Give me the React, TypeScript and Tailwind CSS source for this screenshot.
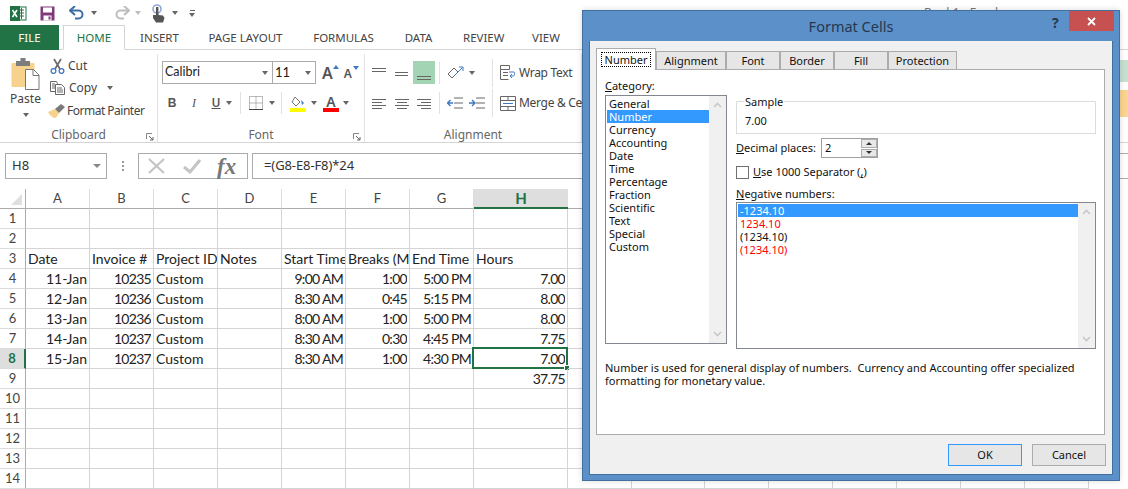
import { ReactNode } from "react";

const caret = "w-0 h-0 border-x-[3.5px] border-x-transparent border-t-[4px] border-t-[#666]";

function Caret({ className = "" }: { className?: string }) {
  return <span className={`${caret} inline-block shrink-0 ${className}`} />;
}

function Lines({ rows, className = "" }: { rows: [number, number, number][]; className?: string }) {
  // each row: x, y, width
  return (
    <svg width="16" height="16" viewBox="0 0 16 16" className={`shrink-0 ${className}`}>
      {rows.map(([x, y, w], i) => (
        <rect key={i} x={x} y={y} width={w} height="1" fill="#666" />
      ))}
    </svg>
  );
}

function ExcelLogo() {
  return (
    <svg width="17" height="17" viewBox="0 0 17 17">
      <rect x="6" y="2" width="10" height="13" fill="#fff" stroke="#207245" />
      <path d="M9 5h5M9 8h5M9 11h5M11.5 3v11" stroke="#207245" />
      <rect x="0" y="1" width="10" height="15" fill="#207245" />
      <path d="M2.5 5l4.5 7M7 5l-4.5 7" stroke="#fff" strokeWidth="1.6" />
    </svg>
  );
}

function SaveIcon() {
  return (
    <svg width="15" height="15" viewBox="0 0 15 15">
      <rect x="0.5" y="0.5" width="14" height="14" fill="#80397b" />
      <rect x="3" y="1.5" width="9" height="5" fill="#fff" />
      <rect x="3.5" y="9.5" width="8" height="5" fill="#fff" />
      <rect x="8.5" y="10.5" width="2" height="3" fill="#80397b" />
    </svg>
  );
}

function UndoIcon({ color }: { color: string }) {
  return (
    <svg width="16" height="14" viewBox="0 0 16 14" fill="none">
      <path d="M2 4.5h7.5a4 4 0 0 1 0 8H6" stroke={color} strokeWidth="2" />
      <path d="M6 0L1 4.5 6 9" stroke={color} strokeWidth="2" />
    </svg>
  );
}

function RedoIcon({ color }: { color: string }) {
  return (
    <svg width="16" height="14" viewBox="0 0 16 14" fill="none">
      <path d="M14 4.5H6.5a4 4 0 0 0 0 8H10" stroke={color} strokeWidth="2" />
      <path d="M10 0l5 4.5L10 9" stroke={color} strokeWidth="2" />
    </svg>
  );
}

function TouchIcon() {
  return (
    <svg width="13" height="19" viewBox="0 0 13 19">
      <circle cx="5" cy="5" r="4" fill="none" stroke="#8fa6d8" strokeWidth="1.6" />
      <rect x="4" y="3" width="2.4" height="9" fill="#555" />
      <path d="M1 11l3 0 0-1h2.4l0 1L11 11.5 12.5 14 11 18.5H4L1 14z" fill="#555" />
    </svg>
  );
}

function ClipboardIcon() {
  return (
    <svg width="29" height="32" viewBox="0 0 29 32">
      <rect x="0.5" y="5" width="23" height="24" rx="1" fill="#f6d28c" />
      <rect x="5" y="3" width="14" height="5" fill="#7d7d7d" />
      <rect x="9.5" y="0" width="5" height="5" fill="#7d7d7d" />
      <path d="M14.5 11.5h8l5.5 5.5v14.5H14.5z" fill="#fff" stroke="#777" />
      <path d="M22 11.5v6h6" fill="none" stroke="#777" />
    </svg>
  );
}

function ScissorsIcon() {
  return (
    <svg width="15" height="16" viewBox="0 0 15 16" fill="none">
      <path d="M4 1l6 10M11 1L5 11" stroke="#6b6b6b" strokeWidth="1.7" />
      <circle cx="3.5" cy="13" r="2.4" stroke="#3f78c4" strokeWidth="1.3" />
      <circle cx="11.5" cy="13" r="2.4" stroke="#3f78c4" strokeWidth="1.3" />
    </svg>
  );
}

function CopyIcon() {
  return (
    <svg width="16" height="14" viewBox="0 0 16 14" fill="none" stroke="#666">
      <path d="M.5.5h6l1 2v8h-7z" fill="#fff" />
      <path d="M5.5 3.5h6l3 3v7h-9z" fill="#fff" />
      <path d="M2 3h3M2 5h3M2 7h3M7 7h5M7 9h6M7 11h6" />
    </svg>
  );
}

function PainterIcon() {
  return (
    <svg width="17" height="14" viewBox="0 0 17 14">
      <path d="M0 8l7-3 4 4-3 5C5 14 2 12 0 8z" fill="#f6d28c" />
      <path d="M7 5l6-5 4 3-6 6z" fill="#7a7a7a" />
    </svg>
  );
}

function Launcher() {
  return (
    <svg width="8" height="8" viewBox="0 0 8 8" fill="none" className="shrink-0">
      <path d="M.5 6V.5H6" stroke="#888" />
      <path d="M3 3l4 4M7 4v3H4" stroke="#666" />
    </svg>
  );
}

function Sep({ tall, className = "" }: { tall?: boolean; className?: string }) {
  return <div className={`w-px bg-[#e1e1e1] shrink-0 ${tall ? "h-[28px]" : "h-[22px]"} ${className}`} />;
}

function Group({ label, className = "", launcher, children }: { label: string; className?: string; launcher?: boolean; children: ReactNode }) {
  return (
    <div className={`relative h-[88px] shrink-0 border-r border-[#e1e1e1] ${className}`}>
      {children}
      <div className="absolute bottom-[-1px] inset-x-0 text-center text-[12px] leading-[16px] text-[#666]">{label}</div>
      {launcher && (
        <div className="absolute right-[3px] bottom-[1px] flex">
          <Launcher />
        </div>
      )}
    </div>
  );
}

function ClipboardGroup() {
  return (
    <Group label="Clipboard" launcher className="w-[158px]">
      <div className="flex">
        <div className="w-[50px] flex flex-col items-center pt-[4px] pl-[1px]">
          <ClipboardIcon />
          <div className="text-[12px] leading-[16px] mt-[1px] text-[#444]">Paste</div>
          <Caret className="mt-[6px]" />
        </div>
        <div className="flex flex-col pt-[2px] text-[12px] text-[#444] leading-[22px]">
          <div className="flex items-center gap-[3px] h-[20px]">
            <ScissorsIcon />
            <span>Cut</span>
          </div>
          <div className="flex items-center gap-[3px] h-[22px] mt-[1px]">
            <CopyIcon />
            <span>Copy</span>
            <Caret className="ml-[7px]" />
          </div>
          <div className="flex items-center gap-[2px] h-[22px] mt-[1px] -ml-[2px]">
            <PainterIcon />
            <span className="tracking-[-0.5px]">Format Painter</span>
          </div>
        </div>
      </div>
    </Group>
  );
}

function FontGroup() {
  return (
    <Group label="Font" launcher className="w-[207px]">
      <div className="flex items-center pt-[7px] pl-[4px]">
        <div className="w-[111px] h-[23px] border border-[#ababab] flex items-center justify-between px-[2px] pr-[4px] text-[12.5px] font-['Lato',sans-serif] text-[#222]">
          <span>Calibri</span>
          <Caret />
        </div>
        <div className="w-[44px] h-[23px] -ml-px border border-[#ababab] flex items-center justify-between px-[2px] pr-[4px] text-[13px] font-['Lato',sans-serif] text-[#222]">
          <span>11</span>
          <Caret />
        </div>
        <div className="ml-[6px] text-[16px] leading-none font-semibold text-[#555] relative">
          A<span className="absolute -right-[6px] top-[0px] w-0 h-0 border-x-[3px] border-x-transparent border-b-[4px] border-b-[#3f78c4]" />
        </div>
        <div className="ml-[11px] text-[12px] leading-none font-semibold text-[#555] relative mt-[2px]">
          A<span className="absolute -right-[7px] -top-[2px] w-0 h-0 border-x-[3px] border-x-transparent border-t-[4px] border-t-[#3f78c4]" />
        </div>
      </div>
      <div className="flex items-center h-[22px] mt-[8px] pl-[7px] text-[#555]">
        <span className="w-[14px] text-center text-[12px] font-bold font-['Liberation_Sans',sans-serif]">B</span>
        <span className="w-[14px] ml-[8px] text-center text-[12px] italic font-['Liberation_Serif',serif]">I</span>
        <span className="w-[14px] ml-[8px] text-center text-[12px] font-semibold underline">U</span>
        <Caret className="ml-[3px]" />
        <Sep className="ml-[8px]" />
        <svg width="14" height="14" viewBox="0 0 14 14" className="ml-[8px]" fill="none">
          <path d="M.5.5h13v13h-13zM7 .5v13M.5 7h13" stroke="#777" strokeDasharray="1 1" />
          <path d="M0 13.5h14" stroke="#444" />
        </svg>
        <Caret className="ml-[6px]" />
        <Sep className="ml-[6px]" />
        <svg width="17" height="17" viewBox="0 0 17 17" className="ml-[8px]" fill="none">
          <path d="M5 2l5 5-4 4-4-4z" stroke="#777" />
          <path d="M11 5l3 3-2 2z" fill="#3f78c4" />
          <rect x="0" y="13" width="16" height="4" fill="#ffff00" />
        </svg>
        <Caret className="ml-[4px]" />
        <div className="ml-[6px] w-[16px] flex flex-col items-center">
          <span className="text-[14px] leading-[13px] font-semibold text-[#555]">A</span>
          <span className="w-[16px] h-[4px] bg-[#ff0000]" />
        </div>
        <Caret className="ml-[4px]" />
      </div>
    </Group>
  );
}

function AlignmentGroup() {
  return (
    <Group label="Alignment" className="w-[217px]">
      <div className="flex items-center h-[23px] mt-[7px]">
        <div className="w-[127px] shrink-0 flex items-center pl-[7px]">
          <Lines rows={[[0, 3, 14], [0, 6, 14]]} className="mr-[6px]" />
          <Lines rows={[[1, 7, 13], [1, 10, 13]]} className="mr-[3px]" />
          <div className="w-[22px] h-[23px] bg-[#a3d4b4] flex items-center justify-center">
            <Lines rows={[[1, 11, 14], [1, 14, 14]]} />
          </div>
          <Sep className="ml-[4px]" />
          <svg width="17" height="16" viewBox="0 0 17 16" fill="none" className="ml-[7px]">
            <path d="M1 9l6-6 4 4-6 6z" stroke="#666" />
            <path d="M9 9l6-6M12 2h4v4" stroke="#3f78c4" />
          </svg>
          <Caret className="ml-[5px]" />
        </div>
        <Sep tall />
        <div className="flex items-center ml-[7px] gap-[3px] text-[12px] text-[#444] tracking-[-0.3px]">
          <svg width="16" height="15" viewBox="0 0 16 15" fill="none">
            <path d="M.5.5h9v4h-9zM.5 4.5v10h8M3 7.5h5M3 10.5h5" stroke="#666" />
            <path d="M9 7h5c1 0 1 4-1 4h-2M12 9l-2 2 2 2" stroke="#3f78c4" />
          </svg>
          <span>Wrap Text</span>
        </div>
      </div>
      <div className="flex items-center h-[24px] mt-[7px]">
        <div className="w-[127px] shrink-0 flex items-center pl-[7px]">
          <Lines rows={[[0, 4, 14], [0, 7, 10], [0, 10, 14], [0, 13, 10]]} className="mr-[6px]" />
          <Lines rows={[[1, 4, 14], [3, 7, 10], [1, 10, 14], [3, 13, 10]]} className="mr-[6px]" />
          <Lines rows={[[1, 4, 14], [5, 7, 10], [1, 10, 14], [5, 13, 10]]} className="mr-[3px]" />
          <Sep className="ml-[4px]" />
          <svg width="16" height="16" viewBox="0 0 16 16" fill="none" className="ml-[7px]">
            <path d="M7 3h9M7 8h9M7 13h9" stroke="#666" />
            <path d="M6 8H1M3.5 5L.5 8l3 3" stroke="#3f78c4" strokeWidth="1.4" />
          </svg>
          <svg width="16" height="16" viewBox="0 0 16 16" fill="none" className="ml-[6px]">
            <path d="M7 3h9M7 8h9M7 13h9" stroke="#666" />
            <path d="M0 8h5M3 5l3 3-3 3" stroke="#3f78c4" strokeWidth="1.4" />
          </svg>
        </div>
        <Sep tall />
        <div className="flex items-center ml-[7px] gap-[3px] text-[12px] text-[#444] whitespace-nowrap tracking-[-0.3px]">
          <svg width="16" height="15" viewBox="0 0 16 15" fill="none">
            <path d="M.5.5h15v14H.5zM.5 4.5h15M.5 10.5h15M8 .5v4M8 10.5v4" stroke="#666" />
            <path d="M3 7.5h10" stroke="#3f78c4" />
          </svg>
          <span>Merge &amp; Center</span>
        </div>
      </div>
    </Group>
  );
}

const tabs: [string, string][] = [
  ["INSERT", "w-[38px]"],
  ["PAGE LAYOUT", "w-[77px]"],
  ["FORMULAS", "w-[61px]"],
  ["DATA", "w-[31px]"],
  ["REVIEW", "w-[40px]"],
  ["VIEW", "w-[27px]"],
];

function Ribbon() {
  return (
    <div className="font-['Noto_Sans',sans-serif]">
      <div className="flex items-center h-[25px] relative">
        <div className="flex items-center pl-[10px] pt-[1px]">
          <ExcelLogo />
          <div className="ml-[13px]">
            <SaveIcon />
          </div>
          <div className="ml-[14px] flex items-center">
            <UndoIcon color="#3b6ea5" />
            <Caret className="ml-[6px]" />
          </div>
          <div className="ml-[17px] flex items-center">
            <RedoIcon color="#bdbdbd" />
            <Caret className="ml-[5px] border-t-[#bdbdbd]" />
          </div>
          <div className="ml-[11px] flex items-center">
            <TouchIcon />
            <Caret className="ml-[7px]" />
          </div>
          <div className="ml-[11px] flex flex-col items-center gap-[2px]">
            <span className="w-[5px] h-px bg-[#666]" />
            <Caret />
          </div>
        </div>
        <div className="absolute left-[924px] top-[4px] text-[12px] text-[#777]">Book1 - Excel</div>
      </div>
      <div className="flex h-[25px] border-b border-[#d4d4d4] text-[11.5px] text-[#444]">
        <div className="w-[59px] h-[25px] bg-[#217346] text-white flex items-center justify-center">FILE</div>
        <div className="ml-[4px] w-[62px] h-[25px] border border-b-white border-[#d4d4d4] bg-white text-[#217346] flex items-center justify-center">HOME</div>
        <div className="flex items-center pl-[15px] pt-[1px] gap-[29px] h-[24px]">
          {tabs.map(([t, w]) => (
            <span key={t} className={`${w} text-center whitespace-nowrap`}>
              {t}
            </span>
          ))}
        </div>
      </div>
      <div className="flex h-[93px] border-b border-[#d4d4d4] pt-[4px]">
        <ClipboardGroup />
        <FontGroup />
        <AlignmentGroup />
        <div className="flex-1 relative">
          <div className="absolute left-[538px] top-[6px] w-[30px] h-[22px] bg-[#c6e0d0]" />
          <div className="absolute left-[538px] top-[36px] w-[30px] h-[27px] bg-[#fbd58f]" />
        </div>
      </div>
    </div>
  );
}

function FormulaBar() {
  return (
    <div className="flex h-[26px] mt-[10px] pl-[5px] font-['Noto_Sans',sans-serif]">
      <div className="w-[102px] border border-[#ababab] flex items-center justify-between pl-[6px] pr-[5px] text-[13px] text-[#333]">
        <span>H8</span>
        <span className="w-0 h-0 border-x-[4px] border-x-transparent border-t-[4px] border-t-[#888]" />
      </div>
      <div className="w-[31px] flex flex-col items-center justify-center gap-[2px]">
        <span className="w-[2px] h-[2px] bg-[#999]" />
        <span className="w-[2px] h-[2px] bg-[#999]" />
        <span className="w-[2px] h-[2px] bg-[#999]" />
      </div>
      <div className="w-[110px] border border-[#ababab] flex items-center pl-[9px]">
        <svg width="17" height="16" viewBox="0 0 17 16" fill="none">
          <path d="M1 1l15 14M16 1L1 15" stroke="#c4c4c4" strokeWidth="2.2" />
        </svg>
        <svg width="18" height="15" viewBox="0 0 18 15" fill="none" className="ml-[18px]">
          <path d="M1 8l6 5L17 1" stroke="#c4c4c4" strokeWidth="3" />
        </svg>
        <span className="ml-[16px] text-[23px] leading-none italic font-bold text-[#777] font-['Liberation_Serif',serif]">fx</span>
      </div>
      <div className="flex-1 ml-[4px] border-y border-[#ababab] border-l flex items-center pl-[11px] text-[13px] text-[#333] tracking-[-0.1px]">=(G8-E8-F8)*24</div>
    </div>
  );
}

const colWidths = [64, 64, 64, 64, 64, 64, 64, 94, 64, 73, 64, 64, 64, 64, 64, 64];
const colNames = ["A", "B", "C", "D", "E", "F", "G", "H", "I", "J", "K", "L", "M", "N", "O", "P"];

// n: digits, which are wider in Lato than in the original font
type Cell = { t: string; r?: boolean; n?: boolean };

const data: Record<number, Record<number, Cell>> = {
  3: { 0: { t: "Date" }, 1: { t: "Invoice #" }, 2: { t: "Project ID" }, 3: { t: "Notes" }, 4: { t: "Start Time" }, 5: { t: "Breaks (Minutes)" }, 6: { t: "End Time" }, 7: { t: "Hours" } },
};

const rowsData: [string, string, string, string, string, string, string][] = [
  ["11-Jan", "10235", "Custom", "9:00 AM", "1:00", "5:00 PM", "7.00"],
  ["12-Jan", "10236", "Custom", "8:30 AM", "0:45", "5:15 PM", "8.00"],
  ["13-Jan", "10236", "Custom", "8:00 AM", "1:00", "5:00 PM", "8.00"],
  ["14-Jan", "10237", "Custom", "8:30 AM", "0:30", "4:45 PM", "7.75"],
  ["15-Jan", "10237", "Custom", "8:30 AM", "1:00", "4:30 PM", "7.00"],
];
rowsData.forEach((r, i) => {
  data[i + 4] = {
    0: { t: r[0], r: true },
    1: { t: r[1], r: true, n: true },
    2: { t: r[2] },
    4: { t: r[3], r: true, n: true },
    5: { t: r[4], r: true, n: true },
    6: { t: r[5], r: true, n: true },
    7: { t: r[6], r: true, n: true },
  };
});
data[9] = { 7: { t: "37.75", r: true, n: true } };

function Sheet() {
  return (
    <div className="mt-[10px] overflow-hidden font-['Lato',sans-serif] text-[14px] text-[#222]">
      <div className="flex h-[20px]">
        <div className="w-[26px] shrink-0 border-r border-b border-[#ababab] relative flex justify-end items-end">
          <span className="w-0 h-0 mr-[3px] mb-[3px] border-l-[11px] border-l-transparent border-b-[11px] border-b-[#dfdfdf]" />
        </div>
        {colNames.map((c, i) => (
          <div
            key={c}
            style={{ width: colWidths[i] }}
            className={`shrink-0 flex items-center justify-center text-[13px] ${
              c === "H"
                ? "bg-[#dedede] border-b-2 border-[#217346] text-[#217346] font-bold text-[15px]"
                : "border-b border-b-[#ababab] border-r border-r-[#dcdcdc] text-[#444]"
            }`}
          >
            {c}
          </div>
        ))}
      </div>
      {Array.from({ length: 14 }, (_, i) => i + 1).map(row => (
        <div key={row} className="flex h-[20px]">
          <div
            className={`w-[26px] shrink-0 flex items-center justify-center text-[13px] border-b border-[#dcdcdc] ${
              row === 8 ? "bg-[#dedede] border-r-2 border-r-[#217346] text-[#217346] font-bold" : "border-r border-r-[#ababab] text-[#444]"
            }`}
          >
            {row}
          </div>
          {colNames.map((c, i) => {
            const cell = data[row]?.[i];
            return (
              <div
                key={c}
                style={{ width: colWidths[i] }}
                className={`relative shrink-0 border-r border-b border-[#d4d4d4] whitespace-nowrap leading-[19px] ${cell?.r ? "text-right pr-[2px]" : "pl-[2px]"} ${cell?.n ? "tracking-[-0.7px]" : ""}`}
              >
                <div className="overflow-hidden">{cell?.t}</div>
                {row === 8 && c === "H" && (
                  <>
                    <div className="absolute -left-[2px] -top-[2px] w-[96px] h-[22px] border-2 border-[#217346]" />
                    <div className="absolute -right-[3px] -bottom-[3px] w-[6px] h-[6px] bg-[#217346] border border-white" />
                  </>
                )}
              </div>
            );
          })}
        </div>
      ))}
    </div>
  );
}

function ScrollArrow({ down }: { down?: boolean }) {
  return (
    <svg width="9" height="6" viewBox="0 0 9 6" fill="none">
      <path d={down ? "M1 1l3.5 3.5L8 1" : "M1 5l3.5-3.5L8 5"} stroke="#c8c8c8" strokeWidth="1.6" />
    </svg>
  );
}

function ListScroll() {
  return (
    <div className="absolute right-0 inset-y-0 w-[17px] bg-[#f0f0f0] flex flex-col items-center justify-between py-[6px]">
      <ScrollArrow />
      <ScrollArrow down />
    </div>
  );
}

const categories = ["General", "Number", "Currency", "Accounting", "Date", "Time", "Percentage", "Fraction", "Scientific", "Text", "Special", "Custom"];
const dialogTabs: [string, string][] = [
  ["Alignment", "w-[70px]"],
  ["Font", "w-[54px]"],
  ["Border", "w-[54px]"],
  ["Fill", "w-[54px]"],
  ["Protection", "w-[69px]"],
];

function FormatCells() {
  return (
    <div className="absolute left-[582px] top-[10px] w-[538px] h-[471px] bg-[#5c90c9] border border-[#41709f] font-['Noto_Sans',sans-serif] text-[11px] text-[#111] shadow-[0_0_6px_rgba(0,0,0,0.15)]">
      <div className="relative h-[30px] flex items-center justify-center pt-[1px] text-[14.5px] text-[#26384f]">
        Format Cells
        <span className="absolute left-[469px] top-[1px] text-[14px] font-bold text-[#26384f]">?</span>
        <div className="absolute right-[5px] top-0 w-[45px] h-[20px] bg-[#c75050] flex items-center justify-center">
          <svg width="9" height="9" viewBox="0 0 9 9" fill="none">
            <path d="M1 1l7 7M8 1L1 8" stroke="#fff" strokeWidth="1.8" />
          </svg>
        </div>
      </div>
      <div className="mx-[6px] h-[434px] bg-[#f0f0f0] border border-[#41709f] border-t-0 px-[6px] pt-[7px]">
        <div className="flex items-end h-[22px] relative z-10">
          <div className="w-[60px] h-[22px] bg-white border border-[#acacac] border-b-0 flex items-center justify-center">
            <span className="border border-dotted border-black px-[3px] leading-[13px]">Number</span>
          </div>
          {dialogTabs.map(([t, w]) => (
            <div key={t} className={`${w} h-[19px] pt-[1px] shrink-0 bg-[#e6e6e6] border border-[#acacac] flex items-center justify-center`}>
              {t}
            </div>
          ))}
        </div>
        <div className="w-[509px] h-[366px] bg-white border border-[#acacac] -mt-px px-[8px]">
          <div className="flex gap-[9px]">
            <div className="w-[122px] shrink-0 pt-[9px]">
              <div className="h-[16px] leading-[14px]">
                <u>C</u>ategory:
              </div>
              <div className="relative h-[249px] border border-[#828790] p-px leading-[13px]">
                {categories.map(c => (
                  <div key={c} className={`w-[102px] h-[13px] pl-[2px] ${c === "Number" ? "bg-[#3399ff] text-white" : ""}`}>
                    {c}
                  </div>
                ))}
                <ListScroll />
              </div>
            </div>
            <div className="w-[362px] pt-[25px]">
              <fieldset className="h-[39px] border border-[#dcdcdc] px-[8px]">
                <legend className="px-[1px] -ml-[1px] leading-[13px]">Sample</legend>
                <div className="pt-[6px] leading-[14px]">7.00</div>
              </fieldset>
              <div className="flex items-center mt-[4px] h-[20px]">
                <span>
                  <u>D</u>ecimal places:
                </span>
                <div className="ml-auto mr-[218px] w-[57px] h-[20px] border border-[#a0a0a0] flex items-center justify-between pl-[3px]">
                  <span>2</span>
                  <div className="w-[16px] h-[18px] flex flex-col gap-px">
                    <div className="flex-1 bg-[#e8e8e8] border border-[#acacac] flex items-center justify-center">
                      <span className="w-0 h-0 border-x-[3px] border-x-transparent border-b-[3px] border-b-[#333]" />
                    </div>
                    <div className="flex-1 bg-[#e8e8e8] border border-[#acacac] flex items-center justify-center">
                      <span className="w-0 h-0 border-x-[3px] border-x-transparent border-t-[3px] border-t-[#333]" />
                    </div>
                  </div>
                </div>
              </div>
              <div className="flex items-center mt-[8px] h-[13px]">
                <span className="w-[13px] h-[13px] bg-white border border-[#707070]" />
                <span className="ml-[4px]">
                  <u>U</u>se 1000 Separator (<u>,</u>)
                </span>
              </div>
              <div className="mt-[8px] h-[15px] leading-[14px]">
                <u>N</u>egative numbers:
              </div>
              <div className="relative h-[147px] border border-[#828790] p-px leading-[13px]">
                <div className="w-[341px] h-[13px] pl-[2px] bg-[#3399ff] text-white">-1234.10</div>
                <div className="h-[13px] pl-[2px] text-[#ff0000]">1234.10</div>
                <div className="h-[13px] pl-[2px]">(1234.10)</div>
                <div className="h-[13px] pl-[2px] text-[#ff0000]">(1234.10)</div>
                <ListScroll />
              </div>
            </div>
          </div>
          <p className="mt-[12px] leading-[13px] whitespace-pre">
            {"Number is used for general display of numbers.  Currency and Accounting offer specialized\nformatting for monetary value."}
          </p>
        </div>
        <div className="flex justify-end gap-[10px] mt-[9px] w-[510px]">
          <div className="w-[74px] h-[22px] bg-[#e6e6e6] border border-[#3399ff] flex items-center justify-center">OK</div>
          <div className="w-[74px] h-[22px] bg-[#e6e6e6] border border-[#acacac] flex items-center justify-center">Cancel</div>
        </div>
      </div>
    </div>
  );
}

export default function App() {
  return (
    <div className="relative w-[1128px] h-[489px] overflow-hidden bg-white">
      <Ribbon />
      <FormulaBar />
      <Sheet />
      <FormatCells />
    </div>
  );
}
